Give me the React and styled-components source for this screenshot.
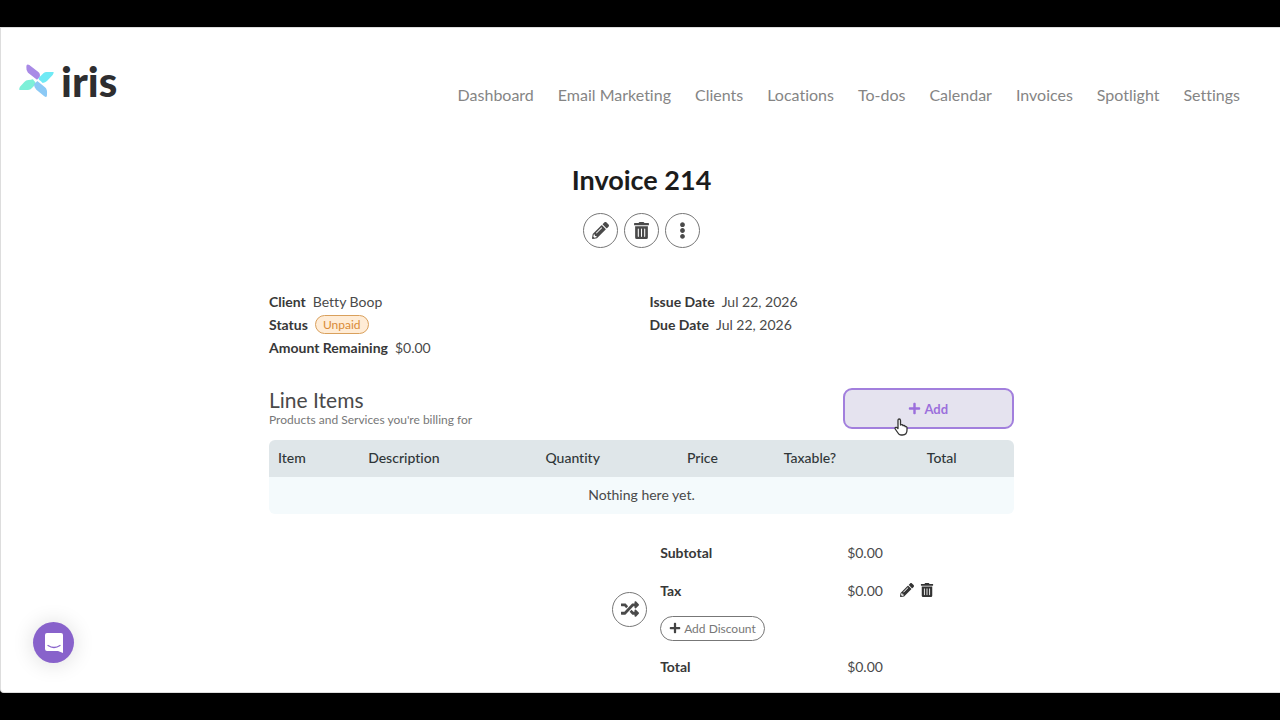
import styled, { createGlobalStyle } from "styled-components"
import { FaPencilAlt, FaTrashAlt, FaEllipsisV, FaPlus, FaRandom } from "react-icons/fa"

const GlobalStyle = createGlobalStyle`
  * { box-sizing: border-box; }
  body {
    margin: 0;
    background: #000;
    color: #4a4a4a;
    font-family: Lato, "Open Sans", sans-serif;
    font-size: 14px;
    font-variant-ligatures: none;
  }
  button { font-family: inherit; cursor: pointer; }
`;

const Frame = styled.div`
  min-height: 100vh;
  padding: 27px 0;
  display: flex;
  flex-direction: column;
`;

const Screen = styled.div`
  flex: 1;
  background: #fff;
  border: 1px solid #ddd;
  border-right: 0;
  border-bottom-left-radius: 4px;
`;

const Header = styled.header`
  display: flex;
  justify-content: space-between;
  align-items: flex-start;
  padding: 31px 40px 0 18px;
`;

const Logo = styled.a`
  display: flex;
  align-items: center;
  gap: 7px;
  color: #2e2e30;
  font-family: Lato, sans-serif;
  font-weight: 900;
  font-size: 42px;
  line-height: 44px;
  text-decoration: none;
`;

const Nav = styled.nav`
  display: flex;
  gap: 24px;
  padding-top: 24px;
`;

const NavLink = styled.a`
  color: #858585;
  font-size: 16px;
  line-height: 24px;
  text-decoration: none;
`;

const Main = styled.main`
  width: 58.4%;
  margin: 0 auto;
  padding-left: 2px;
`;

const Title = styled.h1`
  margin: 53px 0 13px;
  color: #1c1c1c;
  font-size: 27px;
  font-weight: 700;
  line-height: 40px;
  text-align: center;
`;

const Actions = styled.div`
  display: flex;
  justify-content: center;
  gap: 6px;
`;

const RoundButton = styled.button`
  display: flex;
  flex-shrink: 0;
  align-items: center;
  justify-content: center;
  width: 35px;
  height: 35px;
  padding: 0;
  color: #4a4a4a;
  background: #fff;
  border: 1px solid #777;
  border-radius: 50%;
`;

const Details = styled.div`
  display: grid;
  grid-template-columns: 1fr 1fr;
  gap: 16px;
  margin-top: 42px;
`;

const Detail = styled.div`
  display: flex;
  align-items: center;
  gap: 7px;
  line-height: 23px;
`;

const Label = styled.span`
  color: #383838;
  font-weight: 700;
`;

const Badge = styled.span`
  padding: 0 7px;
  color: #d98a35;
  background: #ffecd6;
  border: 1px solid #d9a05c;
  border-radius: 10px;
  font-size: 12px;
  line-height: 17px;
`;

const SectionHead = styled.div`
  display: flex;
  justify-content: space-between;
  align-items: flex-start;
  margin-top: 29px;
`;

const SectionTitle = styled.h2`
  margin: 0;
  font-size: 21px;
  font-weight: 400;
  line-height: 24px;
`;

const SectionNote = styled.p`
  margin: 0;
  color: #777;
  font-size: 12px;
  line-height: 15px;
`;

const AddButton = styled.button`
  display: flex;
  align-items: center;
  justify-content: center;
  gap: 3px;
  position: relative;
  width: 23%;
  height: 41px;
  color: #9b6fdc;
  background: #e5e3ef;
  border: 2px solid #a27fdd;
  border-radius: 9px;
  font-size: 13px;
  font-weight: 700;
`;

const Pointer = styled.svg`
  position: absolute;
  left: 49px;
  top: 28px;
`;

const Table = styled.table`
  width: 100%;
  margin-top: 11px;
  table-layout: fixed;
  border-collapse: collapse;
  border-radius: 6px;
  overflow: hidden;
`;

const Th = styled.th`
  width: ${(p) => p.$width};
  height: 37px;
  padding: 0 9px 2px;
  color: #2f3638;
  background: #dfe6e9;
  font-weight: 500;
  text-align: left;
`;

const Empty = styled.td`
  height: 37px;
  padding: 0 0 2px;
  background: #f4fafc;
  text-align: center;
`;

const Summary = styled.div`
  display: flex;
  align-items: center;
  justify-content: flex-end;
  gap: 13px;
  margin-top: 19px;
`;

const Totals = styled.div`
  width: 47.5%;
`;

const TotalRow = styled.div`
  display: grid;
  grid-template-columns: 187px 53px 1fr;
  align-items: center;
  height: 38px;
`;

const RowIcons = styled.div`
  display: flex;
  gap: 6px;
`;

const IconButton = styled.button`
  display: flex;
  padding: 0;
  color: #333;
  background: none;
  border: 0;
`;

const DiscountButton = styled.button`
  display: flex;
  align-items: center;
  justify-self: start;
  gap: 3px;
  height: 25px;
  padding: 0 8px;
  color: #777;
  background: #fff;
  border: 1px solid #777;
  border-radius: 13px;
  font-size: 12px;
  white-space: nowrap;
  svg { color: #444; }
`;

const ChatButton = styled.button`
  position: fixed;
  left: 33px;
  bottom: 57px;
  display: flex;
  align-items: center;
  justify-content: center;
  width: 41px;
  height: 41px;
  padding: 0;
  background: #8862cb;
  border: 0;
  border-radius: 50%;
  box-shadow: 0 1px 22px rgba(0, 0, 0, 0.14);
`;

const links = ["Dashboard", "Email Marketing", "Clients", "Locations", "To-dos", "Calendar", "Invoices", "Spotlight", "Settings"];

const columns = [
  { name: "Item", width: "12.1%" },
  { name: "Description", width: "23.8%" },
  { name: "Quantity", width: "19%" },
  { name: "Price", width: "13%" },
  { name: "Taxable?", width: "19.2%" },
  { name: "Total", width: "12.9%" },
];

const LogoMark = () => (
  <svg width="35" height="37" viewBox="0 -2 105 111" aria-hidden="true">
    <path d="M22 9Q22 0 31 4L58 25Q65 31 62 40L54 48L27 27Q21 21 22 9Z" fill="#a98ae6" />
    <path d="M104 25H84Q79 24 74 28L58 44Q60 50 65 52L71 58Q79 57 84 52L101 34Q104 30 104 25Z" fill="#6feaf5" />
    <path d="M1 79H27Q34 79 39 73L50 62Q51 55 45 51Q42 45 36 48L28 49Q21 49 16 55L3 69Q0 73 1 79Z" fill="#7df0d8" />
    <path d="M55 52L45 62Q45 72 52 78L75 97Q84 104 84 94Q86 78 78 71Z" fill="#8bc9f5" />
  </svg>
)

const HandPointer = () => (
  <Pointer width="14" height="18" viewBox="0 0 14 18" aria-hidden="true">
    <path
      d="M4 10V2.5Q4 1 5.2 1T6.5 2.5V7Q8.5 6 9 7.7Q11 7 11.2 8.7Q13 8.3 13 10V12Q13 17 8.5 17H7Q5 17 4 15L1.2 11Q.8 9.5 2 9.3Q3 9.2 4 10.5Z"
      fill="#fff" stroke="#333" strokeWidth="1.3" strokeLinejoin="round"
    />
  </Pointer>
)

const App = () => {
  return (
    <Frame>
      <GlobalStyle />
      <Screen>
        <Header>
          <Logo href="#"><LogoMark />iris</Logo>
          <Nav>
            {links.map((link) => <NavLink href="#" key={link}>{link}</NavLink>)}
          </Nav>
        </Header>

        <Main>
          <Title>Invoice 214</Title>
          <Actions>
            <RoundButton aria-label="Edit invoice"><FaPencilAlt size={17} /></RoundButton>
            <RoundButton aria-label="Delete invoice"><FaTrashAlt size={17} /></RoundButton>
            <RoundButton aria-label="More actions"><FaEllipsisV size={17} /></RoundButton>
          </Actions>

          <Details>
            <div>
              <Detail><Label>Client</Label>Betty Boop</Detail>
              <Detail><Label>Status</Label><Badge>Unpaid</Badge></Detail>
              <Detail><Label>Amount Remaining</Label>$0.00</Detail>
            </div>
            <div>
              <Detail><Label>Issue Date</Label>Jul 22, 2026</Detail>
              <Detail><Label>Due Date</Label>Jul 22, 2026</Detail>
            </div>
          </Details>

          <SectionHead>
            <div>
              <SectionTitle>Line Items</SectionTitle>
              <SectionNote>Products and Services you're billing for</SectionNote>
            </div>
            <AddButton><FaPlus size={13} />Add<HandPointer /></AddButton>
          </SectionHead>

          <Table>
            <thead>
              <tr>
                {columns.map((col) => <Th key={col.name} $width={col.width}>{col.name}</Th>)}
              </tr>
            </thead>
            <tbody>
              <tr><Empty colSpan={6}>Nothing here yet.</Empty></tr>
            </tbody>
          </Table>

          <Summary>
            <RoundButton aria-label="Reorder tax and discount"><FaRandom size={18} /></RoundButton>
            <Totals>
              <TotalRow><Label>Subtotal</Label><span>$0.00</span></TotalRow>
              <TotalRow>
                <Label>Tax</Label>
                <span>$0.00</span>
                <RowIcons>
                  <IconButton aria-label="Edit tax"><FaPencilAlt size={14} /></IconButton>
                  <IconButton aria-label="Delete tax"><FaTrashAlt size={14} /></IconButton>
                </RowIcons>
              </TotalRow>
              <TotalRow><DiscountButton><FaPlus size={12} />Add Discount</DiscountButton></TotalRow>
              <TotalRow><Label>Total</Label><span>$0.00</span></TotalRow>
            </Totals>
          </Summary>
        </Main>

        <ChatButton aria-label="Open chat">
          <svg width="20" height="22" viewBox="0 0 20 22">
            <path d="M3 1H17Q19 1 19 3V21L14 19H3Q1 19 1 17V3Q1 1 3 1Z" fill="#fff" />
            <path d="M4 13.5Q10 17.5 16 13.5" fill="none" stroke="#8862cb" strokeWidth="1.3" strokeLinecap="round" />
          </svg>
        </ChatButton>
      </Screen>
    </Frame>
  )
}

export default App
